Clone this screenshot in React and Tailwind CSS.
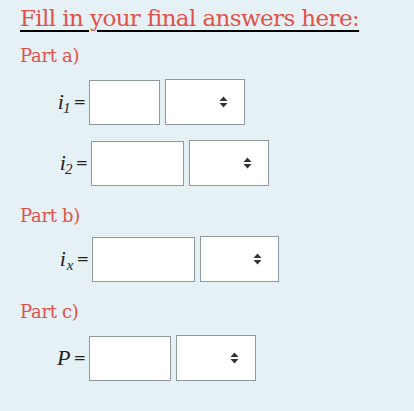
import React from 'react';

const Arrows = () => (
  <svg width="9" height="12" viewBox="0 0 9 12" className="block">
    <path d="M4.5 0.5 L8.5 5 L0.5 5 Z" fill="#333" />
    <path d="M0.5 7 L8.5 7 L4.5 11.5 Z" fill="#333" />
  </svg>
);

const Row = ({ label, inputW, selW, labelW, className }) => (
  <div className={`flex items-center ${className}`}>
    <div className={`flex justify-end items-center pr-[3px] ${labelW}`}>{label}</div>
    <div className={`h-[45px] bg-white border border-[#8e9aa0] ${inputW}`}></div>
    <div className={`ml-[5px] h-[46px] bg-white border border-[#8e9aa0] flex items-center justify-end pr-[16px] ${selW}`}>
      <Arrows />
    </div>
  </div>
);

const Var = ({ main, sub, subGap = '-ml-[1px]' }) => (
  <span className="font-['Liberation_Serif'] italic text-[22px] text-[#222] leading-none whitespace-nowrap">
    {main}
    {sub && <span className={`text-[15px] relative top-[4px] ${subGap}`}>{sub}</span>}
    <span className="not-italic font-['DejaVu_Sans'] text-[15px] ml-[3px] relative -top-[2px]">=</span>
  </span>
);

const Part = ({ children, className }) => (
  <div className={`text-[#e2524b] text-[18px] leading-[24px] tracking-[-0.3px] ${className}`}>{children}</div>
);

export default function App() {
  return (
    <div className="w-[414px] h-[411px] bg-[#e5f1f4] pl-[20px] pt-[2px] font-['DejaVu_Serif']">
      <h1 className="text-[#e2524b] text-[23px] leading-[32px] tracking-[-0.6px] underline decoration-black decoration-[2px] underline-offset-[4px]">
        Fill in your final answers here:
      </h1>
      <Part className="mt-[10px]">Part a)</Part>
      <Row className="mt-[11px]" labelW="w-[69px]" label={<Var main="i" sub="1" />} inputW="w-[71px]" selW="w-[80px]" />
      <Row className="mt-[15px]" labelW="w-[71px]" label={<Var main="i" sub="2" />} inputW="w-[93px]" selW="w-[80px]" />
      <Part className="mt-[18px]">Part b)</Part>
      <Row className="mt-[8px]" labelW="w-[72px]" label={<Var main="i" sub="x" subGap="ml-[1px]" />} inputW="w-[103px]" selW="w-[79px]" />
      <Part className="mt-[18px]">Part c)</Part>
      <Row className="mt-[11px]" labelW="w-[69px]" label={<Var main="P" />} inputW="w-[82px]" selW="w-[80px]" />
    </div>
  );
}
